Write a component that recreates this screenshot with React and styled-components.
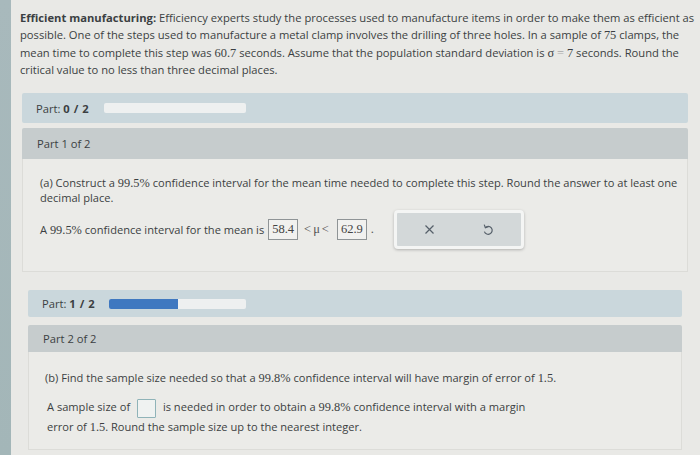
import styled, { createGlobalStyle } from "styled-components";

const Global = createGlobalStyle`
  body {
    margin: 0;
    background: #e9e9e6;
    font-family: "Open Sans", "Noto Sans", sans-serif;
    color: #3b3f42;
  }
`;

const Page = styled.div`
  display: flex;
  min-height: 455px;
  overflow: hidden;
`;

const Strip = styled.div`
  width: 11px;
  flex-shrink: 0;
  background: linear-gradient(180deg, #a8b9bc 0%, #a3b6b8 100%);
`;

const Content = styled.div`
  flex: 1;
  padding-top: 9px;
`;

const Intro = styled.p`
  margin: 0 4px 0 9px;
  font-size: 11.2px;
  line-height: 17.3px;

  b {
    font-weight: 700;
  }
`;

const Num = styled.span`
  font-family: "Liberation Serif", serif;
  font-size: 12.4px;
  line-height: 1;
  color: ${(p) => p.$c || "inherit"};
`;

const Section = styled.div`
  margin: ${(p) => p.$margin};
`;

const PartBar = styled.div`
  display: flex;
  align-items: center;
  gap: ${(p) => p.$gap}px;
  height: ${(p) => p.$h}px;
  padding-left: 14px;
  background: #cad7dc;
  border-radius: 2px;
  font-size: 11.2px;

  b {
    font-weight: 700;
    letter-spacing: 0.5px;
  }
`;

const Progress = styled.div`
  width: ${(p) => p.$w}px;
  height: 10px;
  border-radius: 2px;
  background: #eef0f0;
  overflow: hidden;
  display: flex;
`;

const Fill = styled.div`
  background: #3f78c0;
  height: 100%;
`;

const PartHead = styled.div`
  display: flex;
  align-items: center;
  height: ${(p) => p.$h}px;
  margin-top: ${(p) => p.$top}px;
  padding-left: 15px;
  background: #c6cccd;
  font-size: 11.2px;
  border-radius: 2px 2px 0 0;
`;

const Body = styled.div`
  background: #ebebe8;
  border: 1px solid #dcdcd8;
  border-top: none;
  padding: ${(p) => p.$pad};
  height: ${(p) => p.$h}px;
  box-sizing: border-box;
  font-size: 11.1px;
  line-height: 15px;
`;

const Para = styled.p`
  margin: ${(p) => p.$m || "0"};
  max-width: ${(p) => p.$max || "none"};
  line-height: ${(p) => p.$lh || 15}px;
`;

const AnswerRow = styled.div`
  display: flex;
  align-items: center;
  margin-top: 5px;
  gap: 4px;
`;

const Box = styled.span`
  display: inline-flex;
  align-items: center;
  justify-content: center;
  height: 19px;
  padding: 0 3px;
  border: 1px solid #8f9496;
  background: #f1f1ef;
  font-family: "Liberation Serif", serif;
  font-size: 12.5px;
  color: #444;
`;

const Mu = styled.span`
  font-family: "Liberation Serif", serif;
  font-size: 12.5px;
  color: #555;
  letter-spacing: ${(p) => p.$ls || 0}px;
  margin: 0 ${(p) => p.$mx || 0}px;
`;

const Buttons = styled.div`
  margin-left: 16px;
  display: flex;
  align-items: center;
  justify-content: space-around;
  width: 118px;
  height: 33px;
  padding: 0 3px;
  background: #d3d8d9;
  border: 3px solid #f4f5f4;
  border-radius: 4px;
  box-shadow: 0 1px 3px rgba(0, 0, 0, 0.25);
`;

const Blank = styled.span`
  display: inline-block;
  width: 17px;
  height: 17px;
  margin: 0 4px;
  vertical-align: middle;
  border: 1px solid #8fb3b8;
  background: #eff2f1;
  border-radius: 1px;
`;

const XIcon = () => (
  <svg width="11" height="11" viewBox="0 0 11 11">
    <path d="M1.5 1.5 L9.5 9.5 M9.5 1.5 L1.5 9.5" stroke="#56606a" strokeWidth="1.2" />
  </svg>
);

const UndoIcon = () => (
  <svg width="12" height="13" viewBox="0 0 12 13">
    <path d="M3.2 4.6 A4 4 0 1 1 2.4 8.6" fill="none" stroke="#56606a" strokeWidth="1.2" />
    <path d="M2.2 1.6 L3.4 4.8 L6.4 3.6" fill="none" stroke="#56606a" strokeWidth="1.2" />
  </svg>
);

export default function App() {
  return (
    <>
      <Global />
      <Page>
        <Strip />
        <Content>
          <Intro>
            <b>Efficient manufacturing:</b> Efficiency experts study the processes used to
            manufacture items in order to make them as efficient as possible. One of the steps used
            to manufacture a metal clamp involves the drilling of three holes. In a sample of{" "}
            <Num>75</Num> clamps, the mean time to complete this step was <Num>60.7</Num> seconds.
            Assume that the population standard deviation is <Num>σ</Num>{" "}
            <Num $c="#aaa">=</Num> <Num>7</Num> seconds. Round the critical value to no less than
            three decimal places.
          </Intro>

          <Section $margin="15px 12px 0 11px">
            <PartBar $h={30} $gap={15}>
              <span>
                Part: <b>0 / 2</b>
              </span>
              <Progress $w={142} />
            </PartBar>
            <PartHead $h={31} $top={5}>Part 1 of 2</PartHead>
            <Body $pad="16px 8px 0 17px" $h={113}>
              <Para>
                (a) Construct a <Num>99.5%</Num> confidence interval for the mean time needed to
                complete this step. Round the answer to at least one decimal place.
              </Para>
              <AnswerRow>
                <span>
                  A <Num>99.5%</Num> confidence interval for the mean is
                </span>
                <Box>58.4</Box>
                <Mu $ls={2} $mx={2}>&lt;μ&lt;</Mu>
                <Box>62.9</Box>
                <Mu>.</Mu>
                <Buttons>
                  <XIcon />
                  <UndoIcon />
                </Buttons>
              </AnswerRow>
            </Body>
          </Section>

          <Section $margin="18px 18px 0 17px">
            <PartBar $h={27} $gap={14}>
              <span>
                Part: <b>1 / 2</b>
              </span>
              <Progress $w={137}>
                <Fill style={{ width: `${(1 / 2) * 100}%` }} />
              </Progress>
            </PartBar>
            <PartHead $h={27} $top={8}>Part 2 of 2</PartHead>
            <Body $pad="18px 14px 0 16px" $h={98}>
              <Para>
                (b) Find the sample size needed so that a <Num>99.8%</Num> confidence interval will
                have margin of error of <Num>1.5</Num>.
              </Para>
              <Para $lh={18} $m="13px 0 0 2px" $max="492px">
                A sample size of <Blank /> is needed in order to obtain a <Num>99.8%</Num>{" "}
                confidence interval with a margin error of <Num>1.5</Num>. Round the sample size up
                to the nearest integer.
              </Para>
            </Body>
          </Section>
        </Content>
      </Page>
    </>
  );
}
